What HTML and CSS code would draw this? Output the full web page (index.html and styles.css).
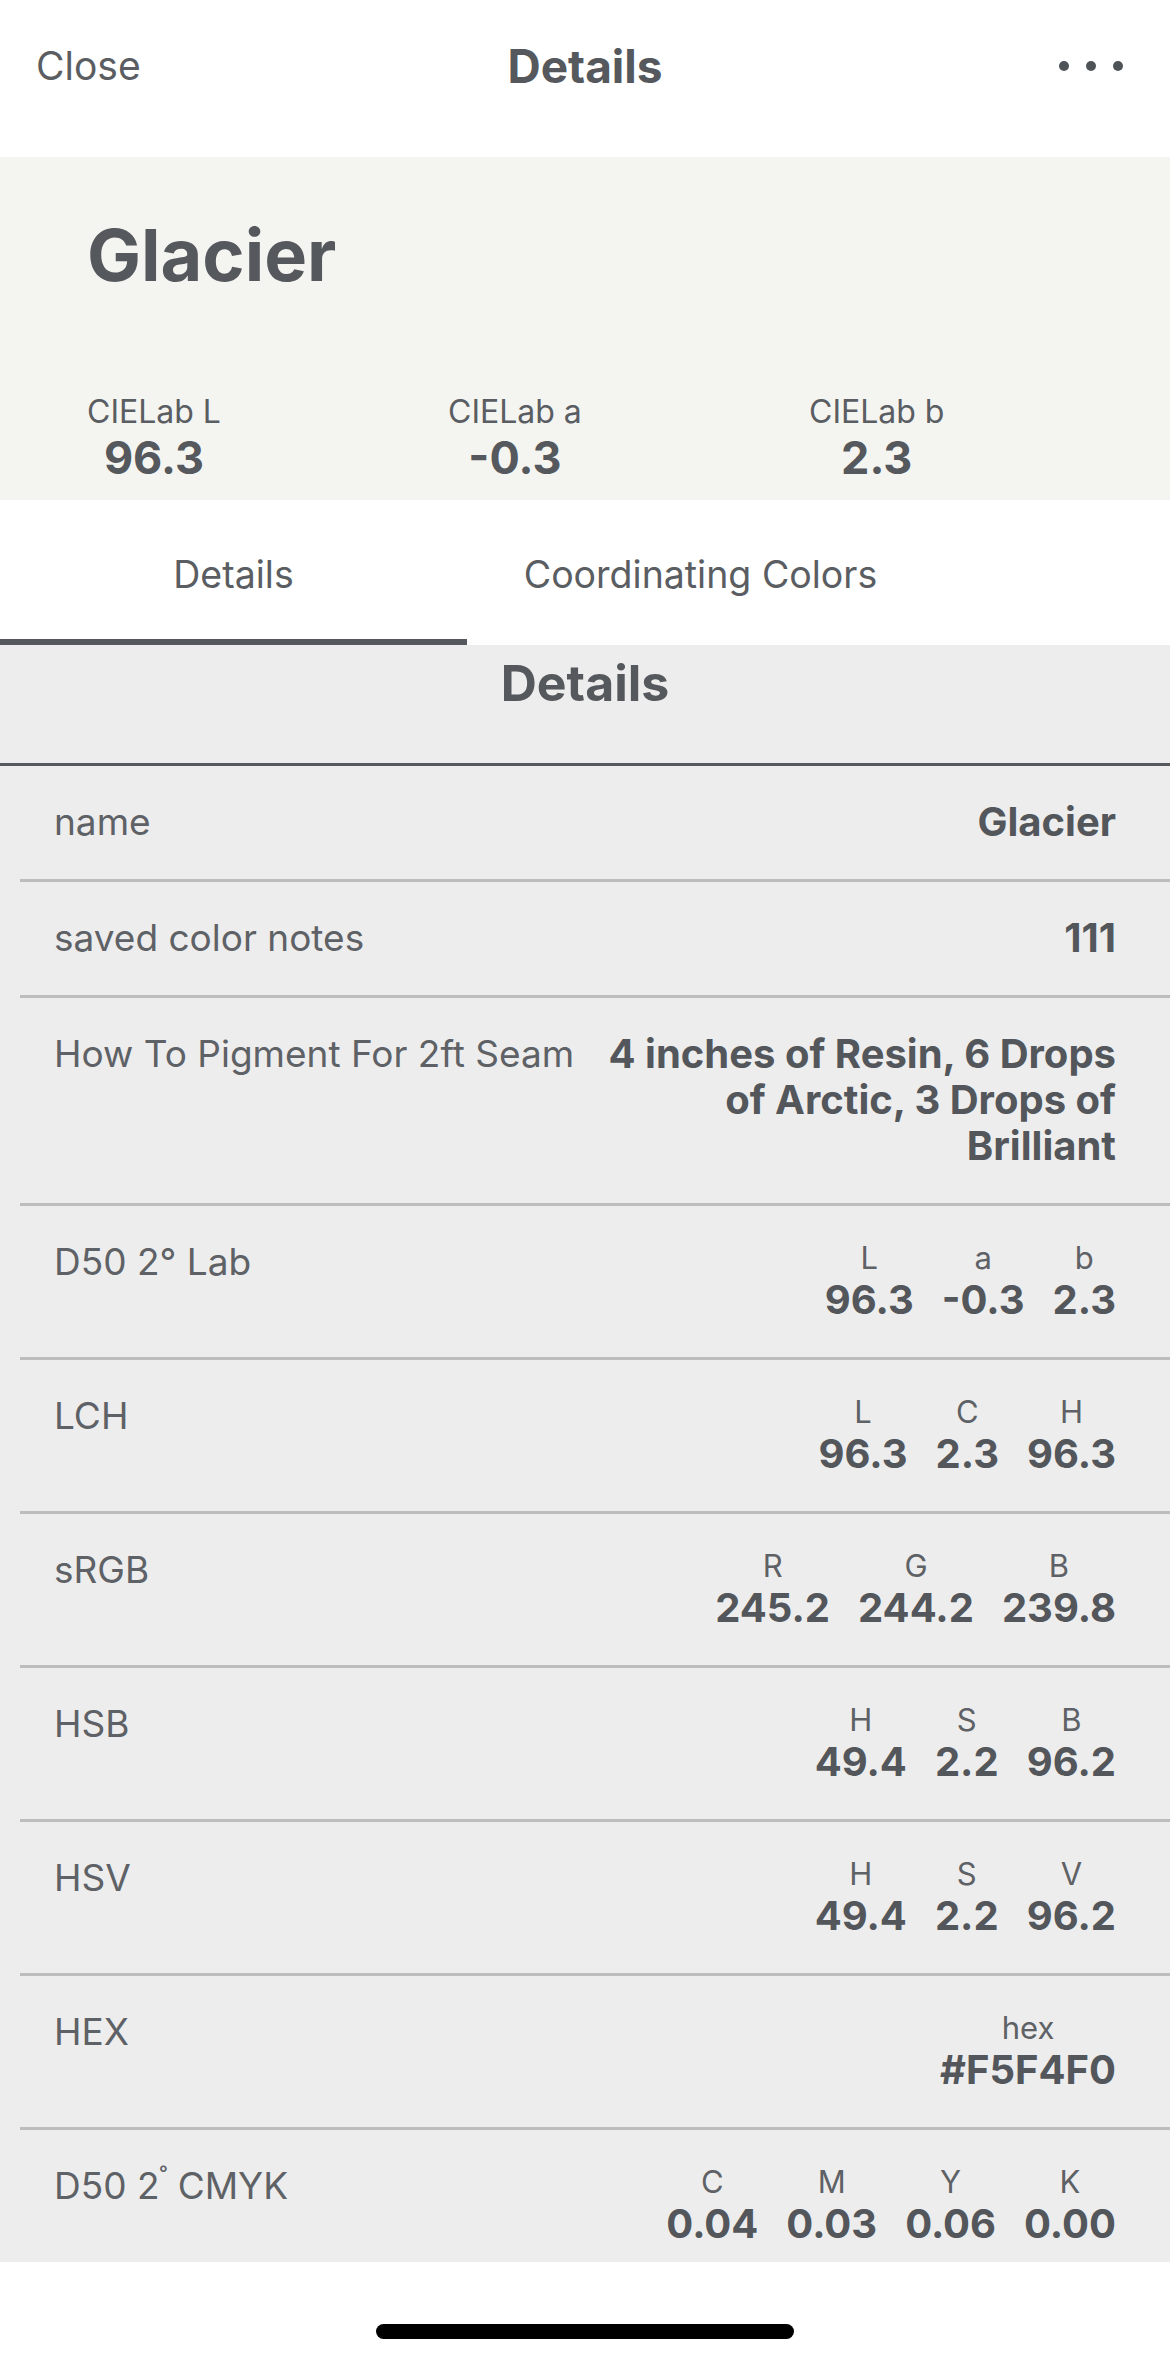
FILE: index.html
```html
<!DOCTYPE html>
<html lang="en">
<head>
<meta charset="utf-8">
<title>Details</title>
<link rel="stylesheet" href="styles.css">
</head>
<body>
<div class="screen">
  <header class="nav">
    <div class="nav-left">Close</div>
    <div class="nav-title">Details</div>
    <div class="nav-right"><span class="dot"></span><span class="dot"></span><span class="dot"></span></div>
  </header>

  <section class="swatch">
    <h1 class="swatch-name">Glacier</h1>
    <div class="lab-grid">
      <div class="lab-item"><div class="lab-label">CIELab L</div><div class="lab-value">96.3</div></div>
      <div class="lab-item"><div class="lab-label">CIELab a</div><div class="lab-value">-0.3</div></div>
      <div class="lab-item"><div class="lab-label">CIELab b</div><div class="lab-value">2.3</div></div>
    </div>
  </section>

  <nav class="tabs">
    <div class="tab tab-active">Details</div>
    <div class="tab">Coordinating Colors</div>
  </nav>

  <section class="details">
    <h2 class="details-title">Details</h2>
    <div class="rows">
      <div class="row">
        <div class="row-label">name</div>
        <div class="row-value">Glacier</div>
      </div>
      <div class="row">
        <div class="row-label">saved color notes</div>
        <div class="row-value">111</div>
      </div>
      <div class="row">
        <div class="row-label">How To Pigment For 2ft Seam</div>
        <div class="row-value">4 inches of Resin, 6 Drops of Arctic, 3 Drops of Brilliant</div>
      </div>
      <div class="row">
        <div class="row-label">D50 2° Lab</div>
        <div class="comps">
          <div class="comp"><div class="comp-label">L</div><div class="comp-value">96.3</div></div>
          <div class="comp"><div class="comp-label">a</div><div class="comp-value">-0.3</div></div>
          <div class="comp"><div class="comp-label">b</div><div class="comp-value">2.3</div></div>
        </div>
      </div>
      <div class="row">
        <div class="row-label">LCH</div>
        <div class="comps">
          <div class="comp"><div class="comp-label">L</div><div class="comp-value">96.3</div></div>
          <div class="comp"><div class="comp-label">C</div><div class="comp-value">2.3</div></div>
          <div class="comp"><div class="comp-label">H</div><div class="comp-value">96.3</div></div>
        </div>
      </div>
      <div class="row">
        <div class="row-label">sRGB</div>
        <div class="comps">
          <div class="comp"><div class="comp-label">R</div><div class="comp-value">245.2</div></div>
          <div class="comp"><div class="comp-label">G</div><div class="comp-value">244.2</div></div>
          <div class="comp"><div class="comp-label">B</div><div class="comp-value">239.8</div></div>
        </div>
      </div>
      <div class="row">
        <div class="row-label">HSB</div>
        <div class="comps">
          <div class="comp"><div class="comp-label">H</div><div class="comp-value">49.4</div></div>
          <div class="comp"><div class="comp-label">S</div><div class="comp-value">2.2</div></div>
          <div class="comp"><div class="comp-label">B</div><div class="comp-value">96.2</div></div>
        </div>
      </div>
      <div class="row">
        <div class="row-label">HSV</div>
        <div class="comps">
          <div class="comp"><div class="comp-label">H</div><div class="comp-value">49.4</div></div>
          <div class="comp"><div class="comp-label">S</div><div class="comp-value">2.2</div></div>
          <div class="comp"><div class="comp-label">V</div><div class="comp-value">96.2</div></div>
        </div>
      </div>
      <div class="row">
        <div class="row-label">HEX</div>
        <div class="comps">
          <div class="comp"><div class="comp-label">hex</div><div class="comp-value">#F5F4F0</div></div>
        </div>
      </div>
      <div class="row row-last">
        <div class="row-label">D50 2<sup class="deg">˚</sup> CMYK</div>
        <div class="comps">
          <div class="comp"><div class="comp-label">C</div><div class="comp-value">0.04</div></div>
          <div class="comp"><div class="comp-label">M</div><div class="comp-value">0.03</div></div>
          <div class="comp"><div class="comp-label">Y</div><div class="comp-value">0.06</div></div>
          <div class="comp"><div class="comp-label">K</div><div class="comp-value">0.00</div></div>
        </div>
      </div>
    </div>
  </section>

  <div class="home-area"><div class="home-indicator"></div></div>
</div>
</body>
</html>
```

FILE: styles.css
```css
* {
  box-sizing: border-box;
}

html, body {
  margin: 0;
  padding: 0;
  background: #ffffff;
}

body {
  font-family: Inter, "Noto Sans", "Liberation Sans", sans-serif;
  color: #55585c;
}

.screen {
  width: 1170px;
  min-height: 2363px;
  background: #ffffff;
}

/* Navigation bar */
.nav {
  height: 157px;
  padding: 0 36px 25px 36px;
  display: grid;
  grid-template-columns: 1fr auto 1fr;
  align-items: center;
}

.nav-left {
  font-size: 39px;
  line-height: 48px;
  font-weight: 400;
  color: #5a5d61;
}

.nav-title {
  font-size: 46px;
  line-height: 56px;
  font-weight: 700;
  color: #55585c;
}

.nav-right {
  display: flex;
  justify-content: flex-end;
  align-items: center;
  gap: 17px;
  padding-right: 11px;
}

.dot {
  width: 10px;
  height: 10px;
  border-radius: 50%;
  background: #4e5357;
}

/* Color swatch panel */
.swatch {
  background: #f4f4f1;
  padding: 53px 0 17px 87px;
}

.swatch-name {
  margin: 0;
  font-size: 72px;
  line-height: 90px;
  font-weight: 700;
  color: #55585c;
}

.lab-grid {
  margin-top: 94px;
  display: grid;
  grid-template-columns: repeat(3, 1fr);
}

.lab-item {
  justify-self: start;
  display: flex;
  flex-direction: column;
  align-items: center;
}

.lab-label {
  font-size: 32px;
  line-height: 36px;
  color: #5a5d61;
}

.lab-value {
  margin-top: 3px;
  font-size: 45px;
  line-height: 50px;
  font-weight: 700;
}

/* Tabs */
.tabs {
  display: flex;
  background: #ffffff;
}

.tab {
  width: 467px;
  height: 145px;
  padding-top: 9px;
  display: flex;
  align-items: center;
  justify-content: center;
  font-size: 37.5px;
  color: #5a5d61;
  border-bottom: 6px solid transparent;
}

.tab-active {
  border-bottom-color: #55585c;
}

/* Details table */
.details {
  background: #ededed;
}

.details-title {
  margin: 0;
  height: 121px;
  padding-top: 8px;
  font-size: 50px;
  line-height: 60px;
  font-weight: 700;
  text-align: center;
  border-bottom: 3px solid #55585c;
}

.rows {
  margin-left: 20px;
}

.row {
  display: flex;
  justify-content: space-between;
  align-items: flex-start;
  gap: 24px;
  padding: 33px 54px 34px 34px;
  border-bottom: 3px solid #bdbdbd;
}

.row-last {
  border-bottom: none;
  padding-bottom: 15px;
}

.row-label {
  flex-shrink: 0;
  white-space: nowrap;
  font-size: 37px;
  line-height: 46px;
  color: #5e6165;
}

.deg {
  font-size: 26px;
  line-height: 0;
  vertical-align: 12px;
}

.row-value {
  text-align: right;
  font-size: 40px;
  line-height: 46px;
  font-weight: 700;
  color: #53565a;
}

.comps {
  display: flex;
  gap: 28px;
}

.comp {
  display: flex;
  flex-direction: column;
  align-items: center;
}

.comp-label {
  font-size: 31px;
  line-height: 38px;
  color: #5e6165;
}

.comp-value {
  font-size: 40px;
  line-height: 46px;
  font-weight: 700;
  color: #53565a;
}

/* Home indicator */
.home-area {
  height: 101px;
  padding-top: 62px;
  display: flex;
  justify-content: center;
}

.home-indicator {
  width: 418px;
  height: 15px;
  border-radius: 8px;
  background: #000000;
}
```
